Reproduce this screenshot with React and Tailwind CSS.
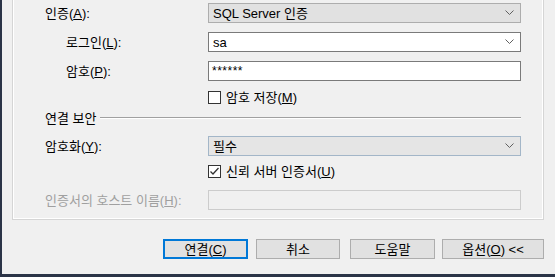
import React from "react";

const Chevron = () => (
  <svg width="9" height="6" viewBox="0 0 9 6" className="shrink-0">
    <polyline points="0.5,0.5 4.5,4.5 8.5,0.5" fill="none" stroke="#606060" strokeWidth="1" />
  </svg>
);

const Check = ({ checked }) => (
  <span className="w-[13px] h-[13px] border border-[#333333] bg-white flex items-center justify-center shrink-0">
    {checked && (
      <svg width="11" height="11" viewBox="0 0 11 11">
        <polyline points="1.5,5.5 4,8 9.5,2" fill="none" stroke="#333333" strokeWidth="1.3" />
      </svg>
    )}
  </span>
);

const Row = ({ label, indent, className = "", disabled, children }) => (
  <div className={`flex items-center h-[20px] ${className}`}>
    <div
      className={`w-[195px] shrink-0 whitespace-nowrap ${indent ? "pl-[53px]" : "pl-[32px]"} ${
        disabled ? "text-[#a0a0a0]" : "text-[#000000]"
      }`}
    >
      {label}
    </div>
    <div className="w-[313px]">{children}</div>
  </div>
);

const Combo = ({ value, variant }) => {
  const styles = {
    gray: "bg-[#e1e1e1] border-[#adadad]",
    white: "bg-white border-[#7a7a7a]",
    blue: "bg-[#e5e5e5] border-[#a3b6c8]",
  };
  return (
    <div className={`h-[20px] border flex items-center justify-between pl-[4px] pr-[6px] ${styles[variant]}`}>
      <span>{value}</span>
      <Chevron />
    </div>
  );
};

const Button = ({ children, focus, w }) => (
  <button
    className={`h-[20px] flex items-center justify-center bg-[#e1e1e1] ${
      focus ? "border-2 border-[#0078d7]" : "border border-[#adadad]"
    } ${w}`}
  >
    {children}
  </button>
);

export default function App() {
  return (
    <div className="w-[555px] h-[277px] bg-[#2b3447] pl-[2px] pb-[3px]">
      <div
        className="h-full bg-[#f0f0f0] text-[13px] leading-none text-black"
        style={{ fontFamily: '"Liberation Sans", "Noto Sans CJK KR", sans-serif' }}
      >
        <div className="ml-[10px] w-[532px] border-l border-r border-b border-[#d5d5d5] shadow-[inset_1px_0_0_#ffffff,inset_-1px_0_0_#ffffff,inset_0_-1px_0_#ffffff] pt-[3px] pb-[9px]">
          <Row label={<>인증(<u>A</u>):</>}>
            <Combo value="SQL Server 인증" variant="gray" />
          </Row>
          <Row label={<>로그인(<u>L</u>):</>} indent className="mt-[9px]">
            <Combo value="sa" variant="white" />
          </Row>
          <Row label={<>암호(<u>P</u>):</>} indent className="mt-[9px]">
            <div className="h-[20px] border border-[#7a7a7a] bg-white flex items-center pl-[3px] text-[12px] tracking-[0.5px]">
              ******
            </div>
          </Row>
          <div className="mt-[9px] h-[14px] flex items-center pl-[195px]">
            <Check />
            <span className="ml-[5px]">
              암호 저장(<u>M</u>)
            </span>
          </div>
          <div className="mt-[7px] h-[14px] flex items-center pl-[32px] pr-[22px]">
            <span>연결 보안</span>
            <div className="flex-1 ml-[4px] border-t border-[#a0a0a0] border-b border-b-white h-0" />
          </div>
          <Row label={<>암호화(<u>Y</u>):</>} className="mt-[11px]">
            <Combo value="필수" variant="blue" />
          </Row>
          <div className="mt-[8px] h-[14px] flex items-center pl-[195px]">
            <Check checked />
            <span className="ml-[5px]">
              신뢰 서버 인증서(<u>U</u>)
            </span>
          </div>
          <Row label={<>인증서의 호스트 이름(<u>H</u>):</>} disabled className="mt-[12px]">
            <div className="h-[20px] border border-[#cccccc] bg-[#f0f0f0]" />
          </Row>
        </div>
        <div className="mt-[19px] pl-[161px] flex items-center">
          <Button focus w="w-[85px]">
            연결(<u>C</u>)
          </Button>
          <Button w="w-[84px] ml-[8px]">취소</Button>
          <Button w="w-[85px] ml-[10px]">도움말</Button>
          <Button w="w-[102px] ml-[7px]">
            옵션(<u>O</u>) &lt;&lt;
          </Button>
        </div>
      </div>
    </div>
  );
}
